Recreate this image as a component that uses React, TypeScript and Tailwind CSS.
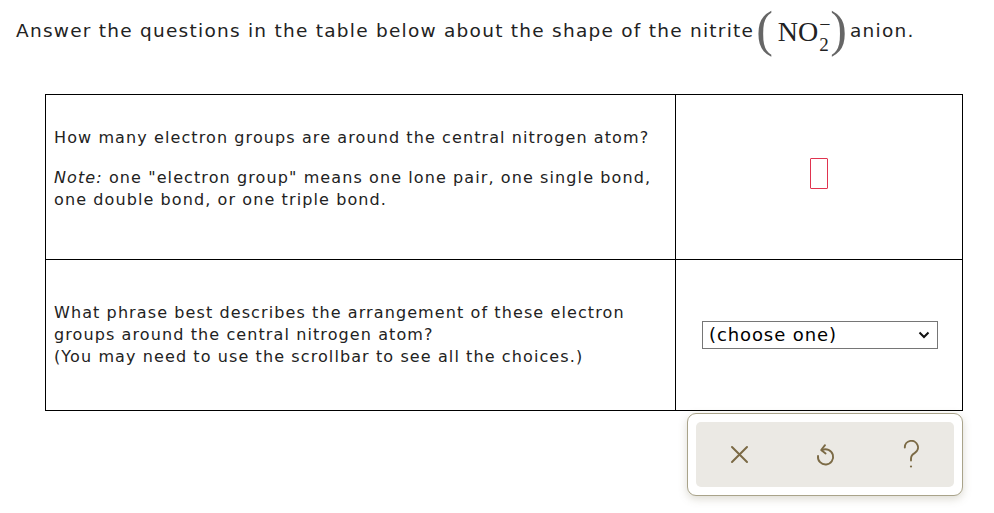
import React from "react";

const SANS = { fontFamily: '"DejaVu Sans", Verdana, sans-serif' };
const SERIF = { fontFamily: '"Liberation Serif", "Times New Roman", serif', letterSpacing: 0 };

function Formula() {
    return (
        <span className="inline-flex items-center ml-[2px] mr-[3px] h-[52px] text-[#222]" style={SERIF}>
            <span className="text-[50px] leading-none text-[#666] relative top-[-2px]">(</span>
            <span className="text-[28px] leading-none ml-[5px] relative top-[1px]">NO</span>
            <span className="relative w-[12px] h-[52px]">
                <span className="absolute top-[9px] left-[1px] text-[20px] leading-none">−</span>
                <span className="absolute top-[30px] left-[1px] text-[19px] leading-none">2</span>
            </span>
            <span className="text-[50px] leading-none text-[#666] relative top-[-2px]">)</span>
        </span>
    );
}

function UndoIcon() {
    return (
        <svg width="20" height="28" viewBox="0 0 20 28" fill="none" stroke="#7b6a45" strokeWidth="1.9" strokeLinecap="round" strokeLinejoin="round">
            <path d="M7 9.2 A7.6 7.6 0 1 1 3 15" />
            <path d="M10 4.2 L6.2 9 L10.6 12.4" />
        </svg>
    );
}

function XIcon() {
    return (
        <svg width="19" height="19" viewBox="0 0 19 19" fill="none" stroke="#7b6a45" strokeWidth="2" strokeLinecap="round">
            <path d="M2 2 L17 17 M17 2 L2 17" />
        </svg>
    );
}

function HelpIcon() {
    return (
        <svg width="17" height="30" viewBox="0 0 17 30" fill="none" stroke="#7b6a45" strokeWidth="1.9" strokeLinecap="round" strokeLinejoin="round">
            <path d="M1.8 7.5 A6.6 6.6 0 1 1 11.6 13.2 C9 14.6 8 16.2 8 18.8 L8 20.5" />
            <circle cx="8" cy="26.5" r="1.1" fill="#7b6a45" stroke="none" />
        </svg>
    );
}

export default function App() {
    return (
        <div className="w-[994px] h-[513px] bg-white text-[#222] relative" style={SANS}>
            {/* Title */}
            <div className="flex items-center pl-[16px] pt-[5px] h-[57px] text-[18.5px] tracking-[1.25px]">
                <span>Answer the questions in the table below about the shape of the nitrite</span>
                <Formula />
                <span>anion.</span>
            </div>

            {/* Question table */}
            <table className="ml-[45px] mt-[37px] border-collapse w-[918px] text-[16px] leading-[22px] tracking-[1.1px]">
                <tbody>
                    <tr className="h-[165px]">
                        <td className="border border-black w-[630px] align-middle pl-[8px] pr-[4px] pb-[17px]">
                            <p>How many electron groups are around the central nitrogen atom?</p>
                            <p className="mt-[18px]">
                                <i>Note:</i> one "electron group" means one lone pair, one single bond,
                                <br />
                                one double bond, or one triple bond.
                            </p>
                        </td>
                        <td className="border border-black align-middle">
                            <div className="flex justify-center pb-[7px]">
                                <div className="w-[18px] h-[31px] border-[1.5px] border-[#e0334f] rounded-[1px]" />
                            </div>
                        </td>
                    </tr>
                    <tr className="h-[151px]">
                        <td className="border border-black align-middle pl-[8px] pr-[4px]">
                            <p>
                                What phrase best describes the arrangement of these electron
                                <br />
                                groups around the central nitrogen atom?
                                <br />
                                (You may need to use the scrollbar to see all the choices.)
                            </p>
                        </td>
                        <td className="border border-black align-middle">
                            <div className="flex justify-center pl-[2px]">
                                <div className="w-[236px] h-[28px] border border-[#767676] flex items-center justify-between pl-[6px] pr-[7px] text-[18px] tracking-[0.9px] text-black">
                                    <span>(choose one)</span>
                                    <svg width="12" height="8" viewBox="0 0 12 8" fill="none" stroke="#111" strokeWidth="2">
                                        <path d="M1.5 1.5 L6 6 L10.5 1.5" />
                                    </svg>
                                </div>
                            </div>
                        </td>
                    </tr>
                </tbody>
            </table>

            {/* Action buttons */}
            <div className="ml-[687px] mt-[2px] w-[276px] h-[83px] bg-white border border-[#a9a38a] rounded-[9px] p-[8px] shadow-[0_3px_8px_rgba(120,110,80,0.25)]">
                <div className="w-full h-full bg-[#ebe9e4] rounded-[5px] flex">
                    <div className="flex-1 flex items-center justify-center">
                        <XIcon />
                    </div>
                    <div className="flex-1 flex items-center justify-center">
                        <UndoIcon />
                    </div>
                    <div className="flex-1 flex items-center justify-center">
                        <HelpIcon />
                    </div>
                </div>
            </div>
        </div>
    );
}
